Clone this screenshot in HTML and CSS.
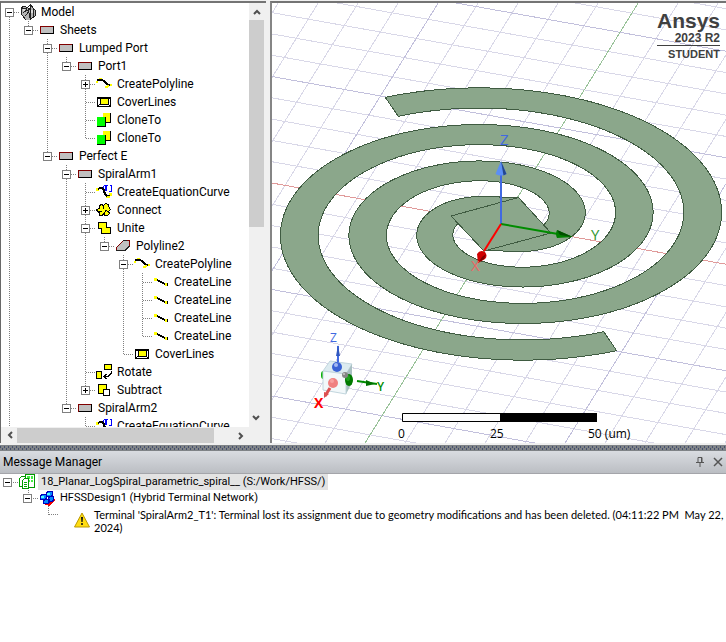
FILE: index.html
```html
<!DOCTYPE html>
<html lang="en">
<head>
<meta charset="utf-8">
<title>Model editor</title>
<link rel="stylesheet" href="styles.css">
</head>
<body>
<svg class="sprites" aria-hidden="true">
  <symbol id="i-model" viewBox="0 0 16 16"><path d="M1 4l3-2 4 2v3l3-4v-1l4 4v6l-4 3-1 1H6l-3-4-2-2z" fill="#b4b4b4" stroke="#222"/><path d="M10.500 0v15M8 3l2.500-2.500L13 3M1 4h5l3 5v5M3 9l4-3M5 12l3-3M13 5v8" fill="none" stroke="#222"/><path d="M3 5h2v2H3zM11 6h2v3h-2z" fill="#ddd"/></symbol>
  <symbol id="i-sheet" viewBox="0 0 16 16"><path d="M1.500 4.500h13v7h-13z" fill="#c0c0c0" stroke="#000"/><path d="M1.500 12V4.500H14" fill="none" stroke="#800000"/></symbol>
  <symbol id="i-poly" viewBox="0 0 16 16"><path d="M0 5h2v2H0zM3 2h3v2H3zM9 10h3v2H9zM13 8h3v2h-3z" fill="#ff0"/><path d="M1 5l2-1.500h3L12 9h2" fill="none" stroke="#000" stroke-width="2"/><path d="M0 5h2v2H0zM11 9h2v2h-2zM14 8h2v2h-2z" fill="#ff0"/></symbol>
  <symbol id="i-cover" viewBox="0 0 16 16"><path d="M1.500 3.500h13v9h-13z" fill="#fff" stroke="#000"/><path d="M4 4.500h8v6H4z" fill="#ff0" stroke="#000"/><path d="M1 3l3 2M15 3l-3 2M1 13l3-3M15 13l-3-3" stroke="#000"/></symbol>
  <symbol id="i-clone" viewBox="0 0 16 16"><path d="M7 1h7v9H7z" fill="#ff0"/><path d="M14.500 1v9.500H9" fill="none" stroke="#000"/><path d="M1 5h8v9H1z" fill="#0f0"/><path d="M9.500 5v9.500H1" fill="none" stroke="#000"/></symbol>
  <symbol id="i-equation" viewBox="0 0 16 16"><path d="M0 4h3v3H0zM10 11h3v3h-3zM13 9h3v3h-3z" fill="#ff0"/><path d="M2 5l2-1h3l2 6 2 2h3" fill="none" stroke="#000" stroke-width="2"/><path d="M0 5h2v2H0zM11 12h3v2h-3zM14 9h2v2h-2z" fill="#ff0"/><path d="M7 3.500l1.500-2h1v5M10.500 1v6M9 1.500h3M14 1.500h1.500v6H13" fill="none" stroke="#00f"/></symbol>
  <symbol id="i-connect" viewBox="0 0 16 16"><path d="M3.500 3.500l2-1 2 1 2-2 3 1v2l2 3-2 2 1 2-2 2H9l-1-2-2 2H3.500V11l-3-3 3-2z" fill="#ff0" stroke="#000"/><path d="M7 3l1 2-1 2M8 12l2-4 3 3M3 9l3 1" fill="none" stroke="#000"/></symbol>
  <symbol id="i-unite" viewBox="0 0 16 16"><path d="M2.500 2.500h8v5h4v6h-9v-5h-3z" fill="#ff0" stroke="#000"/></symbol>
  <symbol id="i-solid" viewBox="0 0 16 16"><path d="M1 12.500V10l6-6 2-1.500h5.500V8L10 12.500z" fill="#c0c0c0" stroke="#800000"/><path d="M1 12.500h9L14.500 8M8 2.500h4" fill="none" stroke="#222"/></symbol>
  <symbol id="i-line" viewBox="0 0 16 16"><path d="M4 6l8 4" stroke="#000" stroke-width="2"/><path d="M1 4h3v3H1zM12 9h2v3h-2z" fill="#ff0"/><path d="M14 9h1v3h-1z"/></symbol>
  <symbol id="i-rotate" viewBox="0 0 16 16"><path d="M8.500.500h7v5h-7zM.500 7.500h5v7h-5z" fill="#ff0" stroke="#000"/><path d="M15.500 7v2L12 12.500H8M10.500 10L8 12.500 10.500 15" fill="none" stroke="#000"/></symbol>
  <symbol id="i-subtract" viewBox="0 0 16 16"><path d="M2.500 2.500h8v9h-8z" fill="#ff0" stroke="#000"/><path d="M7.500 7.500h6v6h-6z" fill="#fff" stroke="#000"/></symbol>
  <symbol id="i-project" viewBox="0 0 16 16"><path d="M6.500.500h9v13h-9z" fill="#fff" stroke="#090"/><path d="M8 2h6v6H8z" fill="#4e4"/><path d="M11 2v6M8 5h6" stroke="#fff"/><path d="M.500 4.500l2-2h4v10h-6z" fill="#fff" stroke="#090"/><path d="M3.500 6.500l2-2h4v10h-6z" fill="#fff" stroke="#090"/><path d="M5 8.500h3M5 10.500h3M5 12.500h3" stroke="#0a0"/></symbol>
  <symbol id="i-design" viewBox="0 0 16 16"><path d="M4 14l6 2 6-6-2-3z" fill="#e00"/><path d="M7.500 2.500l2-1h4v4l-2 1h-4zM1.500 5.500l2-1h4v4l-2 1h-4zM9.500 7.500l2-1h3v4l-2 1h-3zM4.500 10.500l2-1h4v3l-2 1h-4z" fill="#08f" stroke="#00b"/><path d="M8 3h3v2H8zM2 6h3v2H2z" fill="#5ff"/></symbol>
  <symbol id="i-warn" viewBox="0 0 16 16"><path d="M8 1l7.500 14H.500z" fill="#fd1" stroke="#b90" stroke-linejoin="round"/><path d="M7 5h2l-.400 5H7.400zM7.200 11h1.600v2H7.200z" fill="#111"/></symbol>
  <symbol id="i-chevron" viewBox="0 0 8 8"><path d="M1 6l3-3 3 3" fill="none" stroke="#505050" stroke-width="2"/></symbol>
</svg>

<main class="workspace">
  <nav class="tree-panel" aria-label="Model tree">
    <div class="tree-view">
      <ul class="tree" id="tree"></ul>
    </div>
    <div class="vbar">
      <button class="arrow" aria-label="Scroll up"><svg><use href="#i-chevron"/></svg></button>
      <div class="vtrack"><div class="vthumb"></div></div>
      <button class="arrow down" aria-label="Scroll down"><svg><use href="#i-chevron"/></svg></button>
    </div>
    <div class="hbar">
      <button class="arrow left" aria-label="Scroll left"><svg><use href="#i-chevron"/></svg></button>
      <div class="htrack"><div class="hthumb"></div></div>
      <button class="arrow right" aria-label="Scroll right"><svg><use href="#i-chevron"/></svg></button>
    </div>
  </nav>

  <section class="viewport" aria-label="3D view">
    <svg class="scene" viewBox="272 3 454 440" preserveAspectRatio="xMidYMid slice">
      <g id="grid" shape-rendering="crispEdges"></g>
      <g id="spiral" class="sheet" shape-rendering="crispEdges"></g>
      <g class="axes">
        <path d="M501 224v-50" stroke="#4169e1" stroke-width="2"/>
        <path d="M501 161l5.500 13q-5.500 3-11 0z" fill="#5b8ff5"/><path d="M501 161l5.500 13-3 1.500z" fill="#24468f"/>
        <path d="M501 224l57 10" stroke="#008c00" stroke-width="2"/>
        <path d="M573 237l-16-7q-2 4 0 8z" fill="#008000"/><path d="M573 237l-16-7 3 5z" fill="#005000"/>
        <path d="M501 224l-17 27" stroke="#f00" stroke-width="2"/>
        <path d="M478 263l-1-9q3-5 8-2 3 4 0 7z" fill="#d00000"/><path d="M478 263l6-4 2-5-4 3z" fill="#800000"/>
        <text x="500" y="145" fill="#4169e1">Z</text>
        <text x="591" y="240" fill="#2e962e">Y</text>
        <text x="471" y="271" fill="#ee6666">X</text>
      </g>
      <g class="triad">
        <ellipse cx="323" cy="375" rx="2" ry="4" fill="#00b000"/>
        <path d="M323 371l7-10 22 3-6 10z" fill="#dcebf0" stroke="#c2d6de"/>
        <path d="M346 374l6-10v19l-6 11z" fill="#a9c0c2"/>
        <path d="M323 371l23 3v20l-23-4z" fill="#f2f8fa" stroke="#c2d6de"/>
        <path d="M338 362v-16" stroke="#4169e1" stroke-width="2"/><path d="M338 345l2 11h-4z" fill="#3058c0"/>
        <circle cx="337" cy="367" r="5" fill="#3a62d4"/><circle cx="336" cy="365" r="2" fill="#a3b9f3"/>
        <ellipse cx="349" cy="380" rx="4" ry="6" fill="#007a00"/><ellipse cx="348" cy="378" rx="2" ry="3" fill="#20a020"/>
        <circle cx="345" cy="375" r="3" fill="#858585"/><circle cx="344" cy="374" r="1" fill="#ccc"/>
        <path d="M330 388l-5 8" stroke="#dc5050" stroke-width="3"/><path d="M324 398v-6l5 2z" fill="#dc5050"/>
        <circle cx="333" cy="383" r="5" fill="#f08080"/><circle cx="332" cy="381" r="2" fill="#f8a0a0"/>
        <path d="M357 381l20 3" stroke="#008c00" stroke-width="2"/><path d="M375 384l-9-4v6z" fill="#007000"/>
        <text x="330" y="342" fill="#4169e1">Z</text>
        <text x="377" y="391" fill="#008c00" class="strong">Y</text>
        <text x="314" y="408" fill="#f00" class="bold">X</text>
      </g>
      <g class="ruler">
        <path d="M402.500 413.500h194v8h-194z" fill="#fcfcfc" stroke="#000"/>
        <path d="M500 413h97v9h-97z"/>
        <text x="398" y="438">0</text><text x="490" y="438">25</text><text x="588" y="438">50 (um)</text>
      </g>
    </svg>
    <div class="brand">
      <div class="brand-name">Ansys</div>
      <div class="brand-version">2023 R2</div>
      <div class="brand-edition">STUDENT</div>
    </div>
  </section>
</main>

<div class="splitter"></div>

<section class="messages">
  <header class="messages-head">
    <h1>Message Manager</h1>
    <button aria-label="Pin"><svg viewBox="0 0 10 10"><path d="M3 5.500V.500h4v5M1 5.500h8M5 6v4M6.500 1v4" fill="none" stroke="#555"/></svg></button>
    <button aria-label="Close"><svg viewBox="0 0 10 10"><path d="M1 1l8 8M9 1L1 9" stroke="#555" stroke-width="1.500"/></svg></button>
  </header>
  <ul class="tree log">
    <li>
      <div class="row"><button class="toggle" aria-label="Collapse"></button><svg class="icon"><use href="#i-project"/></svg><span class="label selected">18_Planar_LogSpiral_parametric_spiral__ (S:/Work/HFSS/)</span></div>
      <ul>
        <li>
          <div class="row"><button class="toggle" aria-label="Collapse"></button><svg class="icon"><use href="#i-design"/></svg><span class="label">HFSSDesign1 (Hybrid Terminal Network)</span></div>
          <ul>
            <li>
              <div class="row entry"><svg class="icon"><use href="#i-warn"/></svg><span class="label">Terminal 'SpiralArm2_T1': Terminal lost its assignment due to geometry modifications and has been deleted. (04:11:22 PM&nbsp; May 22, 2024)</span></div>
            </li>
          </ul>
        </li>
      </ul>
    </li>
  </ul>
</section>
<script src="scene.js"></script>
</body>
</html>
```
FILE: styles.css
```css
* { box-sizing: border-box; }

body {
  margin: 0;
  height: 100vh;
  display: flex;
  flex-direction: column;
  overflow: hidden;
  background: #f0f0f0;
  color: #000;
  font: 12px/18px Roboto, "Open Sans", sans-serif;
}

button { padding: 0; border: 0; background: none; }
ul { margin: 0; padding: 0; list-style: none; }
.sprites { display: none; }

.workspace {
  flex: 1;
  min-height: 0;
  display: flex;
  gap: 4px;
  padding: 1px 0 2px;
}

/* model tree */
.tree-panel {
  flex: 0 0 266px;
  min-height: 0;
  display: grid;
  grid-template: minmax(0, 1fr) 16px / minmax(0, 1fr) 17px;
  border-top: 2px solid #747474;
  border-left: 1px solid #696969;
}

.tree-view { overflow: hidden; background: #fff; }

.tree ul { margin-left: 19px; }
.tree li { position: relative; }

.tree li::before {
  content: "";
  position: absolute;
  top: 0;
  bottom: 0;
  left: 8px;
  width: 1px;
  background: repeating-linear-gradient(#808080 0 1px, #fff 1px 2px);
}

.tree li:last-child::before { bottom: auto; height: 10px; }
.tree > li::before { top: 10px; }
.tree > li.open-ended:last-child::before { bottom: 0; height: auto; }

.row {
  position: relative;
  display: flex;
  align-items: center;
  height: 18px;
  padding-left: 19px;
  white-space: nowrap;
}

.row::before {
  content: "";
  position: absolute;
  top: 9px;
  left: 9px;
  width: 10px;
  height: 1px;
  background: repeating-linear-gradient(90deg, #808080 0 1px, #fff 1px 2px);
}

.toggle {
  position: absolute;
  top: 5px;
  left: 4px;
  width: 9px;
  height: 9px;
  border: 1px solid #808080;
  background: linear-gradient(#000, #000) center / 5px 1px no-repeat #fff;
}

.toggle.closed {
  background:
    linear-gradient(#000, #000) center / 5px 1px no-repeat,
    linear-gradient(#000, #000) center / 1px 5px no-repeat #fff;
}

.icon { flex: none; width: 16px; height: 16px; shape-rendering: crispEdges; }
.label { padding-left: 5px; }

/* scroll bars */
.arrow { display: grid; place-items: center; width: 15px; height: 17px; }
.arrow svg { width: 8px; height: 8px; }
.arrow.down { transform: rotate(180deg); }
.arrow.left { transform: rotate(-90deg); }
.arrow.right { transform: rotate(90deg); }

.vbar { display: flex; flex-direction: column; }
.vtrack { flex: 1; }
.vthumb { width: 15px; height: 53%; background: #cdcdcd; }
.hbar { display: flex; align-items: center; padding-left: 1px; }
.htrack { flex: 1; height: 15px; }
.hthumb { width: 91%; height: 100%; background: #cdcdcd; }

/* 3D view */
.viewport {
  position: relative;
  flex: 1;
  min-width: 0;
  border-top: 2px solid #747474;
  border-left: 2px solid #858585;
  background: #fff;
}

.scene { display: block; width: 100%; height: 100%; }
.minor { stroke: #d9d8e8; }
.major { stroke: #c2c0dc; }
.axis-x { stroke: #e09a9a; }
.axis-y { stroke: #99c299; }
.sheet path { fill: #8ba78b; stroke: #3f5b41; }
.axes text { font: 15px "Open Sans", sans-serif; }
.triad text { font: 12px "Open Sans", sans-serif; }
.triad .strong { font-weight: 600; }
.triad .bold { font-weight: 700; font-size: 14px; }
.ruler text { font: 12px "Open Sans", sans-serif; }

.brand {
  position: absolute;
  top: 7px;
  right: 6px;
  text-align: right;
  color: #404040;
  font-family: "Liberation Sans", Arial, sans-serif;
  font-weight: 700;
}

.brand-name { font-size: 21px; line-height: 22px; }
.brand-version { font-size: 12px; line-height: 13px; border-bottom: 1px solid #404040; }
.brand-edition { font-size: 11px; line-height: 16px; }

.splitter {
  flex: 0 0 6px;
  background:
    repeating-linear-gradient(90deg, #46506e 0 1px, transparent 1px 4px) 0 1px / 100% 2px no-repeat,
    repeating-linear-gradient(90deg, transparent 0 2px, #46506e 2px 3px, transparent 3px 4px) 0 3px / 100% 2px no-repeat,
    #7f8387;
}

/* messages */
.messages { flex: 0 0 191px; background: #fff; }

.messages-head {
  display: flex;
  align-items: center;
  gap: 8px;
  height: 23px;
  padding: 0 3px;
  border-bottom: 1px solid #a4a5aa;
  background: linear-gradient(#d9dce1, #bbbec3);
}

.messages-head h1 { flex: 1; margin: 0; font-size: 12px; font-weight: 400; }
.messages-head button { width: 10px; height: 10px; }
.messages-head svg { display: block; width: 10px; height: 10px; }

.log { font-size: 11px; line-height: 16px; }
.log ul { margin-left: 20px; }
.log .row { height: 16px; }
.log .row::before { top: 8px; }
.log .toggle { top: 4px; left: 3px; }
.log > li::before { content: none; }
.log .selected { margin-left: 3px; padding: 0 3px; background: #e3e3e3; }
.log .row.entry { height: auto; align-items: flex-start; padding: 0 0 0 34px; line-height: 13px; white-space: normal; }
.log .entry .icon { margin-top: 6px; shape-rendering: auto; }
.log .entry .label { padding: 2px 0 0 4px; font-family: Lato, sans-serif; }
```
FILE: scene.js
```js
const NS = "http://www.w3.org/2000/svg";

// Model tree: [label, icon, children]; "+" marks a collapsed branch.
const model = ["Model", "model", [["Sheets", "sheet", [
  ["Lumped Port", "sheet", [["Port1", "sheet", [
    ["CreatePolyline", "poly", "+"], ["CoverLines", "cover"],
    ["CloneTo", "clone"], ["CloneTo", "clone"]]]]],
  ["Perfect E", "sheet", [
    ["SpiralArm1", "sheet", [
      ["CreateEquationCurve", "equation"], ["Connect", "connect", "+"],
      ["Unite", "unite", [["Polyline2", "solid", [
        ["CreatePolyline", "poly", [["CreateLine", "line"], ["CreateLine", "line"],
          ["CreateLine", "line"], ["CreateLine", "line"]]],
        ["CoverLines", "cover"]]]]],
      ["Rotate", "rotate"], ["Subtract", "subtract", "+"]]],
    ["SpiralArm2", "sheet", [["CreateEquationCurve", "equation"]]]]]]]]];

function node([label, icon, children]) {
  const toggle = !children ? "" : children === "+"
    ? '<button class="toggle closed" aria-label="Expand"></button>'
    : '<button class="toggle" aria-label="Collapse"></button>';
  const nested = Array.isArray(children) ? `<ul>${children.map(node).join("")}</ul>` : "";
  return `<li><div class="row">${toggle}<svg class="icon"><use href="#i-${icon}"/></svg>` +
    `<span class="label">${label}</span></div>${nested}</li>`;
}
const tree = document.getElementById("tree");
tree.innerHTML = node(model);
tree.firstElementChild.classList.add("open-ended");

// Axonometric projection: origin and the screen vectors of one grid cell.
const O = [501, 224], U = [-11.9, 19.17], V = [36, 6.44];

function add(parent, d, cls) {
  const p = document.createElementNS(NS, "path");
  p.setAttribute("d", d);
  if (cls) p.setAttribute("class", cls);
  document.getElementById(parent).append(p);
}
function gridLine(i, a, b, cls) {
  const x = O[0] + a[0] * i, y = O[1] + a[1] * i, n = 30;
  add("grid", `M${x - b[0] * n} ${y - b[1] * n}L${x + b[0] * n} ${y + b[1] * n}`, cls);
}
for (const major of [false, true]) {
  for (let i = -20; i <= 20; i++) {
    if (i === 0 || (i % 5 === 0) !== major) continue;
    gridLine(i, U, V, major ? "major" : "minor");
    gridLine(i, V, U, major ? "major" : "minor");
  }
}
gridLine(0, U, V, "axis-x");
gridLine(0, V, U, "axis-y");

// Two spiral arms, the second being the first turned half way round.
const FLAT = 0.534, PITCH = 34.5 / 90;
function edge(from, to, radius) {
  const out = [];
  for (let i = 0; i <= 240; i++) {
    const a = from + (to - from) * i / 240, r = radius - PITCH * a, t = a * Math.PI / 180;
    out.push([r * Math.sin(t), -r * Math.cos(t) * FLAT]);
  }
  return out;
}
const outer = edge(-26, 520, 254), inner = edge(-27, 452, 216);
const arm = [...outer, [-17.500, 26.500], [30, 6], ...inner.reverse()];
for (const s of [1, -1]) {
  add("spiral", "M" + arm.map(([x, y]) => `${O[0] + s * x} ${O[1] + s * y}`).join("L") + "Z");
}
add("spiral", "M451 216L518.500 197.500L551 233L484 251Z");
```
